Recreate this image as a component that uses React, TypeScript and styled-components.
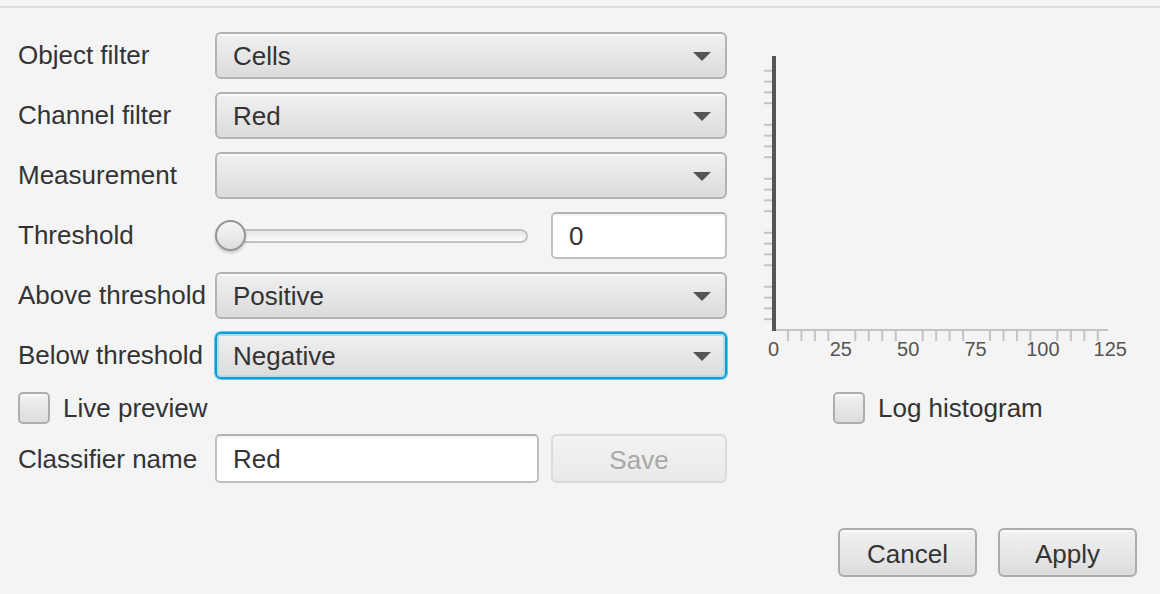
import * as React from 'react'
import styled, { createGlobalStyle, css } from 'styled-components'

const GlobalStyle = createGlobalStyle`
  html, body {
    margin: 0;
    padding: 0;
    background: #f4f4f4;
  }
  body {
    font-family: 'Liberation Sans', Arial, Helvetica, sans-serif;
    color: #333;
    font-size: 26px;
  }
`

const Window = styled.div`
  width: 1160px;
  height: 594px;
  overflow: hidden;
  background: #f4f4f4;
  display: flex;
  flex-direction: column;
`

const TopEdge = styled.div`
  height: 6px;
  border-bottom: 2px solid #dcdcdc;
`

const Body = styled.div`
  display: flex;
  align-items: flex-start;
  padding: 24px 0 0 18px;
`

const Form = styled.div`
  width: 709px;
  display: flex;
  flex-direction: column;
`

const Grid = styled.div`
  display: grid;
  grid-template-columns: 197px 512px;
  grid-auto-rows: 47px;
  row-gap: 13px;
  align-items: center;
`

const Label = styled.div`
  font-size: 26px;
  color: #333;
  white-space: nowrap;
`

const Combo = styled.div<{ focused?: boolean }>`
  height: 47px;
  box-sizing: border-box;
  border: 2px solid #b3b3b3;
  border-radius: 6px;
  background: linear-gradient(#f1f1f1, #dbdbdb);
  box-shadow: inset 0 2px 0 #f9f9f9;
  display: flex;
  align-items: center;
  justify-content: space-between;
  padding: 1px 14px 0 16px;
  font-size: 26px;
  color: #333;
  ${p =>
    p.focused &&
    css`
      border-color: #0a9ed6;
      box-shadow: inset 0 0 0 2px #b7dbe9, 0 0 0 1px #6cc2e3;
    `}
`

const Arrow = styled.span`
  width: 0;
  height: 0;
  border-left: 9px solid transparent;
  border-right: 9px solid transparent;
  border-top: 9px solid #555;
`

const SliderRow = styled.div`
  display: flex;
  align-items: center;
  gap: 23px;
`

const Slider = styled.div`
  position: relative;
  width: 313px;
  height: 47px;
  display: flex;
  align-items: center;
`

const Track = styled.div`
  width: 100%;
  height: 14px;
  box-sizing: border-box;
  border: 2px solid #c2c2c2;
  border-radius: 7px;
  background: linear-gradient(#e6e6e6, #fbfbfb);
`

const Thumb = styled.div`
  position: absolute;
  left: 0;
  top: 8px;
  width: 31px;
  height: 31px;
  box-sizing: border-box;
  border-radius: 50%;
  border: 2px solid #959595;
  background: linear-gradient(#f6f6f6, #dedede);
  box-shadow: 0 2px 3px rgba(0, 0, 0, 0.18);
`

const TextField = styled.div<{ width: number; h?: number }>`
  width: ${p => p.width}px;
  height: ${p => p.h ?? 47}px;
  box-sizing: border-box;
  border: 2px solid #c0c0c0;
  border-top-color: #b2b2b2;
  border-radius: 5px;
  background: #fff;
  box-shadow: inset 0 2px 1px rgba(0, 0, 0, 0.04);
  display: flex;
  align-items: center;
  padding: 2px 0 0 16px;
  font-size: 26px;
  color: #333;
`

const CheckRow = styled.label<{ top?: number; left?: number }>`
  display: flex;
  align-items: center;
  gap: 13px;
  margin-top: ${p => p.top ?? 0}px;
  margin-left: ${p => p.left ?? 0}px;
  font-size: 26px;
  color: #333;
  height: 32px;
`

const Box = styled.span`
  width: 32px;
  height: 32px;
  box-sizing: border-box;
  border: 2px solid #adadad;
  border-radius: 5px;
  background: linear-gradient(#f1f1f1, #dcdcdc);
  box-shadow: inset 0 2px 0 #fafafa;
`

const NameRow = styled.div`
  display: flex;
  align-items: center;
  margin-top: 10px;
`

const NameLabel = styled(Label)`
  width: 197px;
  padding-top: 2px;
`

const Button = styled.div<{ width: number; disabled?: boolean }>`
  width: ${p => p.width}px;
  height: 49px;
  box-sizing: border-box;
  border: 2px solid #acacac;
  border-radius: 6px;
  background: linear-gradient(#f2f2f2, #dcdcdc);
  box-shadow: inset 0 2px 0 #fafafa;
  display: flex;
  align-items: center;
  justify-content: center;
  padding-top: 3px;
  font-size: 26px;
  color: #333;
  ${p =>
    p.disabled &&
    css`
      border-color: #dadada;
      background: linear-gradient(#f3f3f3, #e9e9e9);
      box-shadow: none;
      color: #a8a8a8;
    `}
`

const Side = styled.div`
  margin-left: 13px;
  margin-top: 8px;
  display: flex;
  flex-direction: column;
`

const Chart = styled.svg`
  display: block;
`

const Footer = styled.div`
  display: flex;
  justify-content: flex-end;
  gap: 21px;
  padding-right: 23px;
  margin-top: 45px;
`

function Histogram() {
  const yTicks = []
  for (let i = 1; i < 25; i++) {
    if (i % 5 === 0) continue
    yTicks.push(<rect key={'y' + i} x={24} y={290 - 10.8 * i - 1} width={9} height={2} fill="#c4c4c4" />)
  }
  const xTicks = []
  for (let i = 1; i < 25; i++) {
    if (i % 5 === 0) continue
    xTicks.push(<rect key={'x' + i} x={33.5 + 13.47 * i} y={291} width={2} height={10} fill="#c4c4c4" />)
  }
  const labels = [0, 25, 50, 75, 100, 125]
  return (
    <Chart width={400} height={320} viewBox="0 0 400 320">
      {yTicks}
      <rect x={35} y={289} width={333} height={2} fill="#c4c4c4" />
      {xTicks}
      <rect x={32} y={16} width={4} height={275} fill="#555" />
      {labels.map((v, k) => (
        <text
          key={v}
          x={33.5 + 67.35 * k}
          y={316}
          textAnchor="middle"
          fontSize={20}
          fill="#555"
          fontFamily="'Liberation Sans', Arial, sans-serif"
        >
          {v}
        </text>
      ))}
    </Chart>
  )
}

export default function App() {
  return (
    <Window>
      <GlobalStyle />
      <TopEdge />
      <Body>
        <Form>
          <Grid>
            <Label>Object filter</Label>
            <Combo>
              Cells
              <Arrow />
            </Combo>
            <Label>Channel filter</Label>
            <Combo>
              Red
              <Arrow />
            </Combo>
            <Label>Measurement</Label>
            <Combo>
              <span />
              <Arrow />
            </Combo>
            <Label>Threshold</Label>
            <SliderRow>
              <Slider>
                <Track />
                <Thumb />
              </Slider>
              <TextField width={176}>0</TextField>
            </SliderRow>
            <Label>Above threshold</Label>
            <Combo>
              Positive
              <Arrow />
            </Combo>
            <Label>Below threshold</Label>
            <Combo focused>
              Negative
              <Arrow />
            </Combo>
          </Grid>
          <CheckRow top={13}>
            <Box />
            Live preview
          </CheckRow>
          <NameRow>
            <NameLabel>Classifier name</NameLabel>
            <TextField width={324} h={49}>
              Red
            </TextField>
            <span style={{ width: 12 }} />
            <Button width={176} disabled>
              Save
            </Button>
          </NameRow>
        </Form>
        <Side>
          <Histogram />
          <CheckRow top={32} left={93}>
            <Box />
            Log histogram
          </CheckRow>
        </Side>
      </Body>
      <Footer>
        <Button width={139}>Cancel</Button>
        <Button width={139}>Apply</Button>
      </Footer>
    </Window>
  )
}
